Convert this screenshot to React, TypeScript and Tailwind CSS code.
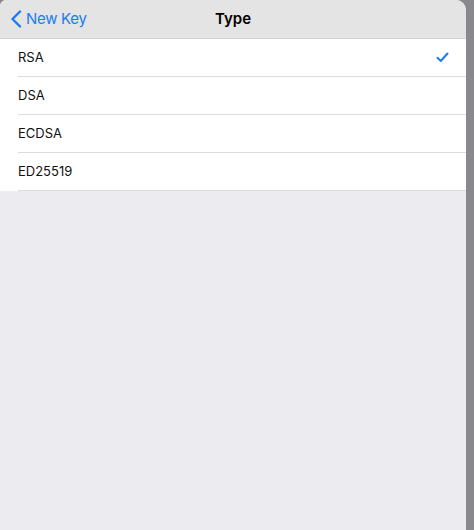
const keyTypes = ['RSA', 'DSA', 'ECDSA', 'ED25519'];

export default function App() {
  const selected = 'RSA';

  return (
    <div
      className="flex h-[530px] w-[474px] bg-[#88888d]"
      style={{ fontFamily: 'Inter, "Liberation Sans", sans-serif' }}
    >
      <div className="flex w-[466px] flex-col overflow-hidden rounded-tl-[6px] rounded-tr-[10px] bg-[#ebebf0]">
        <div className="relative flex h-[39px] items-center border-b border-[#d2d2d6] bg-[#e4e4e4]">
          <button className="flex items-center gap-[4px] pl-[10px] text-[15px] tracking-[-0.3px] text-[#1b7bf5]">
            <svg width="12" height="18" viewBox="0 0 12 18" fill="none">
              <path d="M10 1.5 L2.5 9 L10 16.5" stroke="#1b7bf5" strokeWidth="2.4" strokeLinecap="round" strokeLinejoin="round" />
            </svg>
            <span>New Key</span>
          </button>
          <div className="pointer-events-none absolute left-0 right-0 text-center text-[15px] font-semibold text-black">
            Type
          </div>
        </div>
        <div className="bg-white">
          {keyTypes.map((t) => (
            <div key={t} className="pl-[18px]">
              <div className="flex h-[38px] items-center justify-between border-b border-[#dcdcdf] pr-[17px] text-[13px] text-[#111]">
                <span>{t}</span>
                {t === selected && (
                  <svg width="13" height="11" viewBox="0 0 13 11" fill="none">
                    <path d="M1.5 5.8 L4.8 9 L11.5 1.5" stroke="#1b7bf5" strokeWidth="2" strokeLinecap="round" strokeLinejoin="round" />
                  </svg>
                )}
              </div>
            </div>
          ))}
        </div>
      </div>
    </div>
  );
}
